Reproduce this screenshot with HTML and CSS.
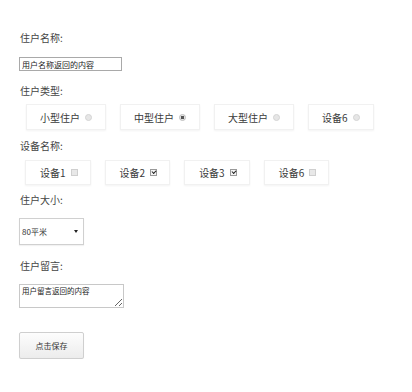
FILE: index.html
```html
<!DOCTYPE html>
<html>
<head>
<meta charset="utf-8">
<link rel="stylesheet" href="styles.css">
</head>
<body>
<form class="form">
  <div class="label l1">住户名称:</div>
  <input class="text-input" type="text" value="用户名称返回的内容">
  <div class="label l2">住户类型:</div>
  <div class="options radios">
    <div class="opt">小型住户<span class="radio"></span></div>
    <div class="opt">中型住户<span class="radio on"></span></div>
    <div class="opt">大型住户<span class="radio"></span></div>
    <div class="opt">设备6<span class="radio"></span></div>
  </div>
  <div class="label l3">设备名称:</div>
  <div class="options checks">
    <div class="opt">设备1<span class="check"></span></div>
    <div class="opt">设备2<span class="check on"></span></div>
    <div class="opt">设备3<span class="check on"></span></div>
    <div class="opt">设备6<span class="check"></span></div>
  </div>
  <div class="label l4">住户大小:</div>
  <div class="select"><span class="sel-text">80平米</span><span class="arrow"></span></div>
  <div class="label l5">住户留言:</div>
  <textarea class="area">用户留言返回的内容</textarea>
  <div class="btn-row"><button class="btn" type="button">点击保存</button></div>
</form>
</body>
</html>
```
FILE: styles.css
```css
html, body {
  margin: 0;
  padding: 0;
  background: #ffffff;
}
body {
  font-family: "Noto Sans CJK SC", "Noto Sans", sans-serif;
  color: #333333;
}
.form {
  display: flex;
  flex-direction: column;
  align-items: flex-start;
  padding: 32px 0 0 19px;
}
.label {
  font-size: 10px;
  line-height: 12px;
  height: 12px;
  color: #444444;
  padding-left: 1px;
}
.text-input {
  margin-top: 13px;
  box-sizing: border-box;
  width: 103px;
  height: 14px;
  border: 1px solid #a9a9a9;
  padding: 0 2px;
  font-family: inherit;
  font-size: 8px;
  color: #222;
  outline: none;
}
.l2 { margin-top: 14px; }
.options {
  display: flex;
  gap: 14px;
  padding-left: 7px;
}
.radios { margin-top: 7px; }
.checks { margin-top: 8px; padding-left: 6px; }
.opt {
  box-sizing: border-box;
  display: flex;
  align-items: center;
  padding: 0 13px;
  font-size: 10px;
  color: #3a3a3a;
  border: 1px solid #f1f1f1;
  box-shadow: 0 1px 2px rgba(0,0,0,0.05);
  background: #fff;
}
.radios .opt { height: 26px; }
.checks .opt { height: 25px; padding: 0 12px 0 14px; }
.radio {
  display: inline-block;
  box-sizing: border-box;
  width: 7px;
  height: 7px;
  margin-left: 5px;
  border-radius: 50%;
  border: 1px solid #d4d4d4;
  background: #e6e6e6;
}
.radio.on {
  background: radial-gradient(circle, #555 0 1.6px, #e6e6e6 2px);
  border-color: #bbb;
}
.check {
  display: inline-block;
  box-sizing: border-box;
  width: 7px;
  height: 7px;
  margin-left: 5px;
  border: 1px solid #cfcfcf;
  background: #e8e8e8;
  position: relative;
}
.check.on {
  background: #f4f4f4;
  border-color: #999;
}
.check.on::after {
  content: "";
  position: absolute;
  left: 1px;
  top: 0px;
  width: 3px;
  height: 2px;
  border-left: 1.2px solid #222;
  border-bottom: 1.2px solid #222;
  transform: rotate(-45deg);
}
.l3 { margin-top: 10px; }
.l4 { margin-top: 9px; }
.select {
  margin-top: 12px;
  box-sizing: border-box;
  width: 65px;
  height: 27px;
  border: 1px solid #d0d0d0;
  box-shadow: 0 1px 1px rgba(0,0,0,0.05);
  display: flex;
  align-items: center;
  justify-content: space-between;
  padding: 0 5px 0 2px;
  background: #fff;
}
.sel-text {
  font-size: 8px;
  color: #333;
}
.arrow {
  width: 0;
  height: 0;
  border-left: 2px solid transparent;
  border-right: 2px solid transparent;
  border-top: 3px solid #222;
}
.l5 { margin-top: 15px; }
.area {
  margin-top: 12px;
  box-sizing: border-box;
  width: 105px;
  height: 24px;
  border: 1px solid #c8c8c8;
  padding: 1px 2px;
  font-family: inherit;
  font-size: 7.5px;
  line-height: 10px;
  color: #222;
  outline: none;
  resize: both;
}
.btn-row { margin-top: 22px; }
.btn {
  box-sizing: border-box;
  width: 65px;
  height: 27px;
  border: 1px solid #cfcfcf;
  border-radius: 2px;
  background: linear-gradient(#fdfdfd, #ececec);
  box-shadow: 0 1px 1px rgba(0,0,0,0.06);
  font-family: inherit;
  font-size: 8px;
  color: #333;
  padding: 0;
}
```
